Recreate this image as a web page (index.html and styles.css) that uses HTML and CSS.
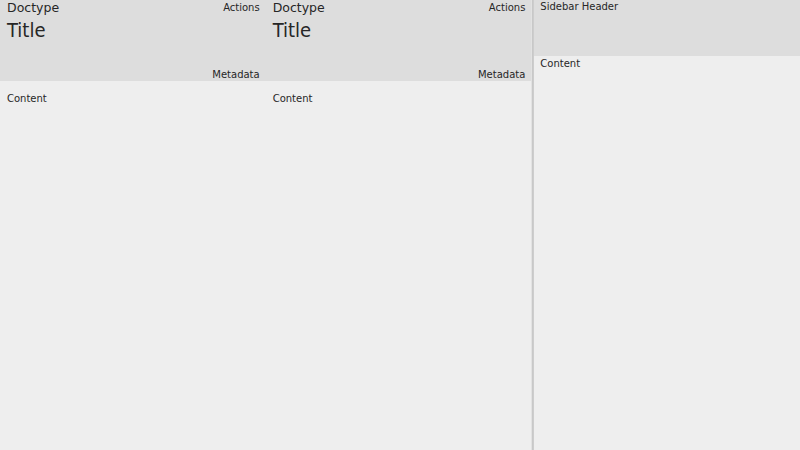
FILE: index.html
```html
<!DOCTYPE html>
<html>
<head>
<meta charset="utf-8">
<link rel="stylesheet" href="styles.css">
</head>
<body>
<div class="app">
  <div class="main">
    <section class="panel">
      <header class="panel-header">
        <div class="top-row">
          <span class="doctype">Doctype</span>
          <span class="actions">Actions</span>
        </div>
        <div class="title">Title</div>
        <div class="metadata">Metadata</div>
      </header>
      <div class="panel-content">Content</div>
    </section>
    <section class="panel">
      <header class="panel-header">
        <div class="top-row">
          <span class="doctype">Doctype</span>
          <span class="actions">Actions</span>
        </div>
        <div class="title">Title</div>
        <div class="metadata">Metadata</div>
      </header>
      <div class="panel-content">Content</div>
    </section>
  </div>
  <div class="divider"></div>
  <aside class="sidebar">
    <header class="sidebar-header">Sidebar Header</header>
    <div class="sidebar-content">Content</div>
  </aside>
</div>
</body>
</html>
```
FILE: styles.css
```css
html, body {
  margin: 0;
  padding: 0;
  height: 100%;
}
body {
  font-family: "DejaVu Sans", sans-serif;
  color: #262626;
  background: #eeeeee;
}
.app {
  display: flex;
  height: 100vh;
}
.main {
  flex: 2;
  display: flex;
  min-width: 0;
}
.panel {
  flex: 1;
  display: flex;
  flex-direction: column;
  min-width: 0;
}
.panel-header {
  background: #dddddd;
  height: 81px;
  box-sizing: border-box;
  padding: 1px 6px 1px 7px;
  display: flex;
  flex-direction: column;
}
.top-row {
  display: flex;
  justify-content: space-between;
  align-items: flex-start;
}
.doctype {
  font-size: 12.5px;
  line-height: 14px;
}
.actions {
  font-size: 10px;
  padding-top: 1px;
}
.title {
  font-family: "DejaVu Sans Condensed", "DejaVu Sans", sans-serif;
  font-stretch: condensed;
  font-size: 20px;
  margin-top: 3px;
}
.metadata {
  margin-top: auto;
  font-size: 10px;
  text-align: right;
}
.panel-content {
  flex: 1;
  background: #eeeeee;
  font-size: 10px;
  padding: 12px 7px;
}
.divider {
  width: 3px;
  background: linear-gradient(to right, #e2e2e2 0, #e2e2e2 1px, #c6c6c6 1px, #cfcfcf 3px);
}
.sidebar {
  flex: 1;
  display: flex;
  flex-direction: column;
  min-width: 0;
}
.sidebar-header {
  background: #dddddd;
  height: 56px;
  box-sizing: border-box;
  padding: 1px 6px;
  font-size: 10px;
}
.sidebar-content {
  flex: 1;
  background: #eeeeee;
  padding: 2px 6px;
  font-size: 10px;
}
```
